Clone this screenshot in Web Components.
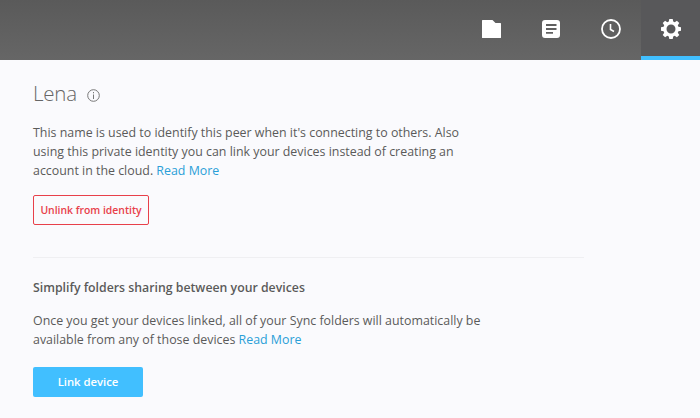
<!DOCTYPE html>
<html>
<head>
<meta charset="utf-8">
<style>
  html, body { margin: 0; height: 100%; background: #fafafd; }
  body { font-family: "Open Sans", "Noto Sans", sans-serif; overflow: hidden; }
  a { color: #2a9fd8; text-decoration: none; }
  sync-text span { display: block; }
</style>
</head>
<body>
<sync-header>
  <sync-tab>
    <svg width="19" height="18" viewBox="0 0 19 18"><path fill="#fff" d="M.6 0h9.900l3 3h4.900c.3 0 .6.300.6.600v13.800c0 .3-.3.600-.6.600H.6c-.3 0-.6-.3-.6-.6V.6C0 .3.300 0 .6 0z"/></svg>
  </sync-tab>
  <sync-tab>
    <svg width="18" height="18" viewBox="0 0 18 18"><path fill="#fff" fill-rule="evenodd" d="M3 0h12a3 3 0 0 1 3 3v12a3 3 0 0 1-3 3H3a3 3 0 0 1-3-3V3a3 3 0 0 1 3-3zM4 4v2h10.500V4zm0 4v2h10.500V8zm0 4v1.800h7V12z"/></svg>
  </sync-tab>
  <sync-tab>
    <svg width="20" height="20" viewBox="0 0 20 20" fill="none" stroke="#fff"><circle cx="10" cy="10" r="9" stroke-width="1.800"/><path d="M9.500 5V10.500L13 12.500" stroke-width="1.600"/></svg>
  </sync-tab>
  <sync-tab active>
    <svg width="20" height="20" viewBox="0 0 20 20"><path fill="#fff" fill-rule="evenodd" d="M8.300 0h3.400l.5 2.600 1.500.6 2.200-1.500 2.400 2.400-1.500 2.200.6 1.500 2.600.5v3.400l-2.600.5-.6 1.500 1.500 2.200-2.400 2.400-2.200-1.500-1.500.6-.5 2.600H8.300l-.5-2.600-1.500-.6-2.200 1.500-2.400-2.400 1.500-2.200-.6-1.500-2.600-.5V8.300l2.600-.5.6-1.500-1.500-2.200 2.400-2.400 2.200 1.500 1.500-.6zM10 5.500a4.500 4.500 0 1 0 0 9 4.500 4.500 0 0 0 0-9z"/></svg>
  </sync-tab>
</sync-header>
<sync-panel>
  <sync-title>Lena</sync-title>
  <sync-text first>
    <span>This name is used to identify this peer when it's connecting to others. Also</span>
    <span>using this private identity you can link your devices instead of creating an</span>
    <span>account in the cloud. <a href="#">Read More</a></span>
  </sync-text>
  <sync-button variant="outline">Unlink from identity</sync-button>
  <sync-divider></sync-divider>
  <sync-subtitle>Simplify folders sharing between your devices</sync-subtitle>
  <sync-text>
    <span>Once you get your devices linked, all of your Sync folders will automatically be</span>
    <span>available from any of those devices <a href="#">Read More</a></span>
  </sync-text>
  <sync-button variant="solid">Link device</sync-button>
</sync-panel>
<script>
function define(name, html) {
  customElements.define(name, class extends HTMLElement {
    constructor() {
      super();
      this.attachShadow({ mode: "open" }).innerHTML = html;
    }
  });
}

define("sync-header", `
  <style>
    :host { display: flex; justify-content: flex-end; height: 60px; background: linear-gradient(#5a5a5a, #666); }
  </style>
  <slot></slot>
`);

define("sync-tab", `
  <style>
    :host { display: flex; align-items: center; justify-content: center; box-sizing: border-box; width: 60px; height: 60px; padding-bottom: 2px; }
    :host([active]) { width: 59px; background: #58585a; border-bottom: 4px solid #41bfff; padding: 2px 0 0; }
  </style>
  <slot></slot>
`);

define("sync-panel", `
  <style>
    :host { display: flex; flex-direction: column; align-items: flex-start; padding: 19px 0 0 33px; }
  </style>
  <slot></slot>
`);

define("sync-title", `
  <style>
    :host { display: flex; align-items: center; gap: 10px; font-size: 20.5px; font-weight: 300; letter-spacing: -0.2px; line-height: 28px; color: #666; }
    svg { margin-top: 5px; }
  </style>
  <slot></slot>
  <svg width="13" height="13" viewBox="0 0 13 13" fill="none" stroke="#777"><circle cx="6.500" cy="6.500" r="5.800"/><path d="M6.500 5.500v4.500M6.500 3v1.300"/></svg>
`);

define("sync-text", `
  <style>
    :host { display: block; font-size: 12.4px; line-height: 18.7px; color: #5a5a5a; margin-top: 15px; white-space: nowrap; }
    :host([first]) { margin-top: 17.4px; }
  </style>
  <slot></slot>
`);

define("sync-button", `
  <style>
    :host { display: inline-flex; align-items: center; justify-content: center; box-sizing: border-box; height: 30px; border-radius: 2px; }
    :host([variant=outline]) { width: 116px; font-size: 10.4px; font-weight: 600; color: #e8404a; border: 1px solid #e8404a; margin-top: 14.6px; }
    :host([variant=solid]) { width: 110px; font-size: 11.300px; font-weight: 600; color: #fff; background: #41bfff; margin-top: 17px; }
  </style>
  <slot></slot>
`);

define("sync-divider", `
  <style>
    :host { display: block; width: 551px; height: 1px; background: #efeff2; margin-top: 32px; }
  </style>
`);

define("sync-subtitle", `
  <style>
    :host { display: block; font-size: 12.3px; font-weight: 600; line-height: 19px; color: #5a5a5a; margin-top: 20px; }
  </style>
  <slot></slot>
`);
</script>
</body>
</html>
